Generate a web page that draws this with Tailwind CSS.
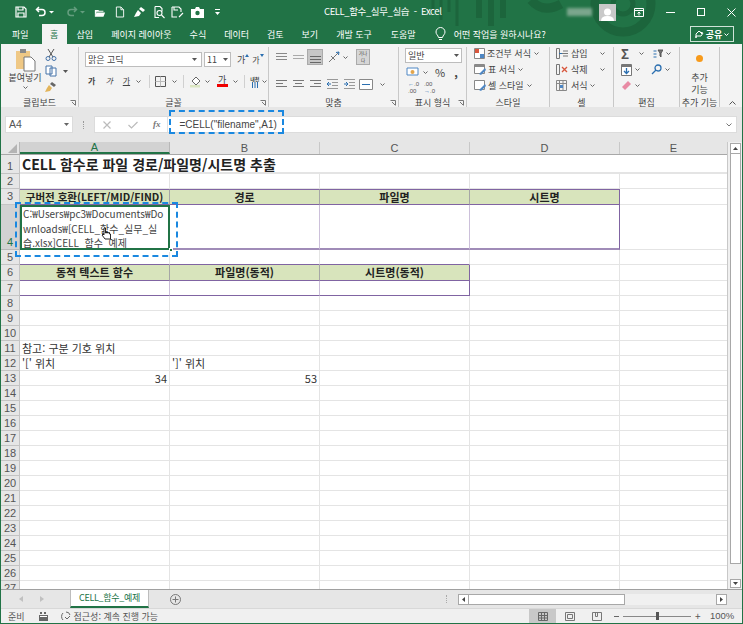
<!DOCTYPE html>
<html lang="ko">
<head>
<meta charset="UTF-8" />
<title>CELL_함수_실무_실습 - Excel</title>
<script src="https://cdn.jsdelivr.net/npm/@tailwindcss/browser@4"></script>
</head>
<body class="w-[743px] h-[624px] overflow-hidden bg-[#217346] font-['Noto_Sans_CJK_KR','Liberation_Sans',sans-serif] text-[#444]">
<div class="relative w-[743px] h-[624px] flex flex-col border-x border-b border-[#217346]">

  <!-- title bar -->
  <div class="relative h-[24px] shrink-0 flex items-center text-white">
    <svg class="absolute left-[430px] top-0" width="260" height="44" viewBox="0 0 260 44" fill="none" stroke="#1c653c"><path d="M2 0v12M10 0v20M18 0v12M26 0v26" stroke-width="3"/><path d="M48 0v18M60 0v26M72 0v18" stroke-width="6"/><circle cx="192" cy="4" r="28" stroke-width="9"/><circle cx="192" cy="4" r="10" stroke-width="5"/><path d="M100 0q12 14 30 4" stroke-width="9"/></svg>
    <div class="relative flex items-center w-full">
      <svg class="ml-[14px]" width="12" height="12" viewBox="0 0 12 12" fill="none" stroke="#fff" stroke-width="1.2"><path d="M1 1h8l2 2v8H1z"/><path d="M3 1v3h5V1M3 11V7h6v4"/></svg>
      <svg class="ml-[8px]" width="12" height="12" viewBox="0 0 12 12" fill="none" stroke="#fff" stroke-width="1.5"><path d="M4 1 1.500 3.500 4 6M2 3.500h5a3 3 0 0 1 0 6H4"/></svg>
      <svg class="ml-[2px]" width="6" height="4" viewBox="0 0 6 4" fill="#fff"><path d="M0 1h5L2.500 3.500z"/></svg>
      <svg class="ml-[11px] opacity-30" width="12" height="12" viewBox="0 0 12 12" fill="none" stroke="#fff" stroke-width="1.5"><path d="M8 1l2.500 2.500L8 6M10 3.500H5a3 3 0 0 0 0 6h3"/></svg>
      <svg class="ml-[2px] opacity-30" width="6" height="4" viewBox="0 0 6 4" fill="#fff"><path d="M0 1h5L2.500 3.500z"/></svg>
      <svg class="ml-[8px]" width="12" height="11" viewBox="0 0 14 12" fill="#fff"><path d="M1 3h4l1 1h5v1H3l-2 6zM3 6h10l-2 5H1z"/></svg>
      <svg class="ml-[9px]" width="10" height="12" viewBox="0 0 11 12" fill="none" stroke="#fff"><path d="M1.500 .5h5l3 3v8h-8zM6.500 .5v3h3"/></svg>
      <svg class="ml-[8px]" width="13" height="12" viewBox="0 0 13 12" fill="#fff"><path d="M8 1l4 3-2 2-4-3zM5 4l3 3-2 3-5 1 2-4z"/></svg>
      <svg class="ml-[7px]" width="12" height="13" viewBox="0 0 12 13" fill="none" stroke="#fff" stroke-width="1.100"><path d="M2 .5h5l2 2v3M2 .5v11h4"/><circle cx="6.500" cy="7" r="2.500"/><path d="M8.500 9l3 3"/></svg>
      <svg class="ml-[6px]" width="13" height="12" viewBox="0 0 13 12" fill="none" stroke="#fff" stroke-width="1.100"><path d="M1 1h7l2 2v3M1 1v10h5M3 1v3h4M8 11l4-4"/></svg>
      <svg class="ml-[7px]" width="13" height="11" viewBox="0 0 13 11" fill="#fff"><path d="M0 2h4l1-2h3l1 2h4v9H0z"/><circle cx="6.500" cy="6" r="2.200" fill="#217346"/></svg>
      <svg class="ml-[11px]" width="6" height="7" viewBox="0 0 6 7" fill="#fff"><path d="M0 0h5v1H0zM0 3h5L2.500 6z"/></svg>
      <span class="ml-[103px] w-[109px] shrink-0 text-[9.500px] tracking-[-0.4px] leading-none whitespace-nowrap">CELL_함수_실무_실습 &nbsp;-&nbsp; Excel</span>
      <div class="ml-[134px] w-[25px] h-[8px] bg-[#7ba68d] blur-[1.5px]"></div>
      <div class="ml-[7px] w-[17px] h-[17px] bg-[#c9c9c9] flex items-end justify-center overflow-hidden">
        <svg width="13" height="14" viewBox="0 0 13 14" fill="#fff"><circle cx="6.500" cy="5" r="3.500"/><path d="M0 14q0-5 6.500-5T13 14z"/></svg>
      </div>
      <svg class="ml-[18px]" width="10" height="9" viewBox="0 0 10 9" fill="none" stroke="#fff"><path d="M.500.500h9v8h-9zM.500 2.500h9M5 7.500V4M3.500 5.500 5 4l1.500 1.500"/></svg>
      <div class="ml-[22px] w-[9px] h-px bg-white"></div>
      <div class="ml-[22px] w-[8px] h-[8px] border border-white"></div>
      <svg class="ml-[22px]" width="9" height="9" viewBox="0 0 9 9" stroke="#fff"><path d="M.500.500l8 8M8.500.500l-8 8"/></svg>
    </div>
  </div>

  <!-- tabs -->
  <div class="relative h-[20px] shrink-0 flex items-center text-white text-[9px] leading-none whitespace-nowrap">
    <span class="ml-[11px]">파일</span>
    <span class="ml-[13px] w-[25px] h-[20px] flex items-center justify-center bg-[#f3f3f3] text-[#217346]">홈</span>
    <span class="ml-[10px]">삽입</span>
    <span class="ml-[18px]">페이지 레이아웃</span>
    <span class="ml-[18px]">수식</span>
    <span class="ml-[18px]">데이터</span>
    <span class="ml-[18px]">검토</span>
    <span class="ml-[18px]">보기</span>
    <span class="ml-[18px]">개발 도구</span>
    <span class="ml-[19px]">도움말</span>
    <svg class="ml-[19px]" width="11" height="14" viewBox="0 0 11 14" fill="none" stroke="#fff"><path d="M3.500 10.500C3 8 1 7.500 1 5a4.500 4.500 0 0 1 9 0c0 2.500-2 3-2.500 5.500zM4 12.500h3"/></svg>
    <span class="ml-[8px]">어떤 작업을 원하시나요?</span>
    <div class="ml-auto mr-[8px] w-[44px] h-[16px] border border-[#cfe3d8] flex items-center justify-center gap-[2px]">
      <svg width="9" height="9" viewBox="0 0 9 9" fill="none" stroke="#fff"><path d="M1 8V4l3-3 1 1 3 1-2 3H1zM5 2l2 2"/></svg>
      <span class="font-bold">공유</span>
      <svg width="5" height="3" viewBox="0 0 5 3" fill="none" stroke="#fff"><path d="M.500.500l2 2 2-2"/></svg>
    </div>
  </div>

  <!-- ribbon -->
  <div class="relative h-[63px] shrink-0 flex bg-[#f3f3f3] text-[9px] leading-none whitespace-nowrap">
    <!-- clipboard -->
    <div class="w-[78px] shrink-0 relative flex flex-col border-r border-[#c8c8c8] mt-[3px]">
      <div class="flex-1 flex">
        <div class="ml-[6px] w-[36px] flex flex-col items-center">
          <svg class="mt-[1px]" width="21" height="24" viewBox="0 0 21 24"><path d="M1 3h14v18H1z" fill="#efc885"/><path d="M5 1h6v4H5z" fill="#8a8a8a"/><path d="M9 9h7l4 4v10H9z" fill="#fff" stroke="#777"/></svg>
          <span class="mt-[1px]">붙여넣기</span>
          <svg class="mt-[4px]" width="5" height="3" viewBox="0 0 5 3" fill="none" stroke="#666"><path d="M.500.500l2 2 2-2"/></svg>
        </div>
        <div class="ml-[2px] flex flex-col gap-[4px] mt-[1px]">
          <svg width="12" height="13" viewBox="0 0 12 13" fill="none" stroke="#4472a8"><path d="M3 1l5 8M9 1L4 9" stroke="#555"/><circle cx="3" cy="10.500" r="2"/><circle cx="9" cy="10.500" r="2"/></svg>
          <div class="flex items-center gap-[8px]">
            <svg width="12" height="12" viewBox="0 0 12 12" fill="#fff" stroke="#4472a8"><path d="M1 1h6v8H1zM5 3h6v8H5z"/></svg>
            <svg width="5" height="3" viewBox="0 0 5 3" fill="#555" class="-ml-[2px]"><path d="M0 0h5L2.500 3z"/></svg>
          </div>
          <svg width="12" height="12" viewBox="0 0 12 12"><path d="M7 1l4 3-2 2-4-3z" fill="#666"/><path d="M4 4l3 3-2 3-5 1 2-4z" fill="#e2b45a"/></svg>
        </div>
      </div>
      <div class="relative h-[10px] flex items-center justify-center text-[9px]">클립보드
        <svg class="absolute right-[2px] bottom-[1px]" width="6" height="6" viewBox="0 0 6 6" fill="none" stroke="#777"><path d="M.500.500h5v5M2 2l3 3"/></svg>
      </div>
    </div>
    <!-- font -->
    <div class="w-[190px] shrink-0 relative flex flex-col border-r border-[#c8c8c8] mt-[3px]">
      <div class="flex items-center mt-[5px] ml-[6px] h-[15px]">
        <div class="w-[117px] h-[15px] bg-white border border-[#bdbdbd] flex items-center justify-between px-[2px]"><span>맑은 고딕</span><svg width="5" height="3" viewBox="0 0 5 3" fill="#555" class="mr-[2px]"><path d="M0 0h5L2.500 3z"/></svg></div>
        <div class="ml-[2px] w-[27px] h-[15px] bg-white border border-[#bdbdbd] flex items-center justify-between px-[2px]"><span>11</span><svg width="5" height="3" viewBox="0 0 5 3" fill="#555"><path d="M0 0h5L2.500 3z"/></svg></div>
        <span class="ml-[6px] text-[9px]">가</span>
        <svg class="mb-[8px]" width="4" height="3" viewBox="0 0 4 3" fill="#2b6fb0"><path d="M2 0l2 3H0z"/></svg>
        <span class="ml-[3px] text-[8px]">가</span>
        <svg class="mb-[8px]" width="4" height="3" viewBox="0 0 4 3" fill="#2b6fb0"><path d="M0 0h4L2 3z"/></svg>
      </div>
      <div class="flex items-center mt-[7px] ml-[9px] h-[14px] text-[8px]">
        <span class="font-bold">가</span>
        <span class="ml-[10px] italic">가</span>
        <span class="ml-[10px] underline">가</span>
        <svg class="ml-[6px]" width="5" height="3" viewBox="0 0 5 3" fill="none" stroke="#666"><path d="M.500.500l2 2 2-2"/></svg>
        <div class="ml-[8px] w-px h-[13px] bg-[#d0d0d0]"></div>
        <svg class="ml-[5px]" width="11" height="11" viewBox="0 0 11 11" fill="none" stroke="#555"><path d="M.500.500h10v10H.500z"/><path d="M5.500.500v10M.500 5.500h10" stroke="#bbb"/></svg>
        <svg class="ml-[6px]" width="5" height="3" viewBox="0 0 5 3" fill="none" stroke="#666"><path d="M.500.500l2 2 2-2"/></svg>
        <div class="ml-[6px] w-px h-[13px] bg-[#d0d0d0]"></div>
        <svg class="ml-[5px]" width="12" height="13" viewBox="0 0 12 13"><path d="M3 6l4-4 4 4-4 4z" fill="#fff" stroke="#666"/><path d="M1 10h10v2.500H1z" fill="#dbe6c2"/></svg>
        <svg class="ml-[4px]" width="5" height="3" viewBox="0 0 5 3" fill="none" stroke="#666"><path d="M.500.500l2 2 2-2"/></svg>
        <span class="ml-[6px] flex flex-col items-center w-[12px] text-[9px] leading-[9px]">가<span class="block w-[11px] h-[3px] bg-[#f00000]"></span></span>
        <svg class="ml-[5px]" width="5" height="3" viewBox="0 0 5 3" fill="none" stroke="#666"><path d="M.500.500l2 2 2-2"/></svg>
        <div class="ml-[6px] w-px h-[13px] bg-[#d0d0d0]"></div>
        <span class="ml-[5px] flex flex-col items-center text-[5px] leading-[7px] font-bold">내천
          <svg width="8" height="6" viewBox="0 0 8 6" stroke="#2b6fb0"><path d="M1.500 0v6M4 0v6M6.500 0v6"/></svg>
        </span>
        <svg class="ml-[3px]" width="5" height="3" viewBox="0 0 5 3" fill="none" stroke="#666"><path d="M.500.500l2 2 2-2"/></svg>
      </div>
      <div class="relative mt-auto h-[10px] flex items-center justify-center">글꼴
        <svg class="absolute right-[2px] bottom-[1px]" width="6" height="6" viewBox="0 0 6 6" fill="none" stroke="#777"><path d="M.500.500h5v5M2 2l3 3"/></svg>
      </div>
    </div>
    <!-- align -->
    <div class="w-[130px] shrink-0 relative flex flex-col border-r border-[#c8c8c8] mt-[3px]">
      <div class="flex items-center mt-[2px] ml-[7px] h-[16px]">
        <svg width="11" height="8" viewBox="0 0 11 8" stroke="#888"><path d="M0 .500h11M0 3.500h11M0 6.500h11" /></svg>
        <svg class="ml-[6px]" width="11" height="8" viewBox="0 0 11 8" stroke="#aaa"><path d="M0 2.500h11M0 5.500h11"/></svg>
        <div class="ml-[3px] w-[16px] h-[16px] bg-[#c6c6c6] border border-[#aaa] flex items-end justify-center pb-[1px]"><svg width="11" height="8" viewBox="0 0 11 8" stroke="#666"><path d="M0 1.500h11M0 4.500h11M0 7.500h11"/></svg></div>
        <svg class="ml-[5px]" width="13" height="12" viewBox="0 0 13 12" fill="none" stroke="#777"><path d="M1 11l10-10M3 5l4 4" /><path d="M11 1l-3 .500M11 1l-.500 3" stroke="#2b6fb0"/></svg>
        <svg class="ml-[2px]" width="5" height="3" viewBox="0 0 5 3" fill="none" stroke="#666"><path d="M.500.500l2 2 2-2"/></svg>
        <div class="ml-[8px] w-[14px] h-[16px] bg-[#d6d6d6] border border-[#aaa] text-[4.500px] leading-[7px] text-center">가나<br />다</div>
      </div>
      <div class="flex items-center mt-[13px] ml-[7px] h-[12px]">
        <svg width="11" height="9" viewBox="0 0 11 9" stroke="#777"><path d="M0 .500h11M0 3.500h7M0 6.500h11"/></svg>
        <svg class="ml-[6px]" width="11" height="9" viewBox="0 0 11 9" stroke="#777"><path d="M0 .500h11M2 3.500h7M0 6.500h11"/></svg>
        <svg class="ml-[6px]" width="11" height="9" viewBox="0 0 11 9" stroke="#777"><path d="M0 .500h11M4 3.500h7M0 6.500h11"/></svg>
        <svg class="ml-[6px]" width="11" height="10" viewBox="0 0 11 10" stroke="#999" fill="none"><path d="M0 .500h11M5 3.500h6M5 6.500h6M0 9.500h11"/><path d="M4 5H0M2 3 0 5l2 2" stroke="#2b6fb0"/></svg>
        <svg class="ml-[6px]" width="11" height="10" viewBox="0 0 11 10" stroke="#999" fill="none"><path d="M0 .500h11M5 3.500h6M5 6.500h6M0 9.500h11"/><path d="M0 5h4M2 3l2 2-2 2" stroke="#2b6fb0"/></svg>
        <svg class="ml-[4px]" width="14" height="11" viewBox="0 0 14 11" stroke="#888" fill="#fff"><path d="M.500.500h13v10H.500z"/><path d="M3 5.500h8" stroke="#2b6fb0"/></svg>
        <svg class="ml-[7px]" width="5" height="3" viewBox="0 0 5 3" fill="none" stroke="#666"><path d="M.500.500l2 2 2-2"/></svg>
      </div>
      <div class="relative mt-auto h-[10px] flex items-center justify-center">맞춤
        <svg class="absolute right-[2px] bottom-[1px]" width="6" height="6" viewBox="0 0 6 6" fill="none" stroke="#777"><path d="M.500.500h5v5M2 2l3 3"/></svg>
      </div>
    </div>
    <!-- number -->
    <div class="w-[68px] shrink-0 relative flex flex-col border-r border-[#c8c8c8] mt-[3px]">
      <div class="ml-[6px] mt-px w-[57px] h-[15px] bg-white border border-[#bdbdbd] flex items-center justify-between px-[2px]"><span>일반</span><svg width="5" height="3" viewBox="0 0 5 3" fill="#555"><path d="M0 0h5L2.500 3z"/></svg></div>
      <div class="flex items-center mt-[2px] ml-[7px] h-[14px]">
        <svg width="13" height="11" viewBox="0 0 13 11"><path d="M1 1h11v7H1z" fill="#fff" stroke="#4e87c4"/><circle cx="6.500" cy="5" r="2" fill="#e2a54b"/></svg>
        <svg class="ml-[4px]" width="5" height="3" viewBox="0 0 5 3" fill="none" stroke="#666"><path d="M.500.500l2 2 2-2"/></svg>
        <span class="ml-[7px] text-[11px]">%</span>
        <span class="ml-[9px] text-[11px] font-bold">,</span>
      </div>
      <div class="flex items-center mt-[2px] ml-[9px] h-[14px] text-[6px] leading-[7px] font-['Liberation_Sans']">
        <span class="text-[#555]"><span class="text-[#2b6fb0]">←</span>.0<br />.00</span>
        <span class="ml-[5px] text-[#555]">.00<br /><span class="text-[#2b6fb0]">→</span>.0</span>
      </div>
      <div class="relative mt-auto h-[10px] flex items-center justify-center">표시 형식
        <svg class="absolute right-[2px] bottom-[1px]" width="6" height="6" viewBox="0 0 6 6" fill="none" stroke="#777"><path d="M.500.500h5v5M2 2l3 3"/></svg>
      </div>
    </div>
    <!-- styles -->
    <div class="w-[83px] shrink-0 flex flex-col border-r border-[#c8c8c8] mt-[3px]">
      <div class="ml-[7px] flex flex-col gap-[3px]">
        <div class="flex items-center h-[13px] gap-[2px]"><svg width="11" height="11" viewBox="0 0 11 11"><path d="M.500.500h10v10H.500z" fill="#fff" stroke="#888"/><path d="M1 1h4v4H1z" fill="#d8563c"/><path d="M6 6h4v4H6z" fill="#4e87c4"/></svg>조건부 서식<svg class="ml-[1px]" width="5" height="3" viewBox="0 0 5 3" fill="none" stroke="#666"><path d="M.500.500l2 2 2-2"/></svg></div>
        <div class="flex items-center h-[13px] gap-[2px]"><svg width="12" height="11" viewBox="0 0 12 11"><path d="M.500.500h10v9H.500z" fill="#fff" stroke="#888"/><path d="M1 1h9v2H1z" fill="#8a8a8a"/><path d="M5 10l6-6 1 2-5 5z" fill="#4e87c4"/></svg>표 서식<svg class="ml-[1px]" width="5" height="3" viewBox="0 0 5 3" fill="none" stroke="#666"><path d="M.500.500l2 2 2-2"/></svg></div>
        <div class="flex items-center h-[13px] gap-[2px]"><svg width="12" height="11" viewBox="0 0 12 11"><path d="M.500.500h10v9H.500z" fill="#fff" stroke="#888"/><path d="M5 10l6-6 1 2-5 5z" fill="#4e87c4"/></svg>셀 스타일<svg class="ml-[1px]" width="5" height="3" viewBox="0 0 5 3" fill="none" stroke="#666"><path d="M.500.500l2 2 2-2"/></svg></div>
      </div>
      <div class="mt-auto h-[10px] flex items-center justify-center">스타일</div>
    </div>
    <!-- cells -->
    <div class="w-[64px] shrink-0 flex flex-col border-r border-[#c8c8c8] mt-[3px]">
      <div class="ml-[6px] flex flex-col gap-[3px]">
        <div class="flex items-center h-[13px]"><svg width="13" height="11" viewBox="0 0 13 11" fill="none" stroke="#777"><path d="M.500 .5h3v10h-3zM6 5.500h6M7 3h5M7 8h5"/><path d="M3 5.500h3" stroke="#2b6fb0"/></svg><span class="ml-[2px]">삽입</span><svg class="ml-[12px]" width="5" height="3" viewBox="0 0 5 3" fill="none" stroke="#666"><path d="M.500.500l2 2 2-2"/></svg></div>
        <div class="flex items-center h-[13px]"><svg width="13" height="11" viewBox="0 0 13 11" fill="none" stroke="#777"><path d="M.500 .5h3v10h-3z"/><path d="M6 3l5 5M11 3 6 8" stroke="#d8563c" stroke-width="1.300"/></svg><span class="ml-[2px]">삭제</span><svg class="ml-[12px]" width="5" height="3" viewBox="0 0 5 3" fill="none" stroke="#666"><path d="M.500.500l2 2 2-2"/></svg></div>
        <div class="flex items-center h-[13px]"><svg width="13" height="11" viewBox="0 0 13 11" fill="none" stroke="#888"><path d="M.500.500h10v10H.500zM.500 3.500h10M3.500.500v10M7 .500v10"/><path d="M4 5h3v3H4z" fill="#4e87c4" stroke="none"/></svg><span class="ml-[2px]">서식</span><svg class="ml-[2px]" width="5" height="3" viewBox="0 0 5 3" fill="none" stroke="#666"><path d="M.500.500l2 2 2-2"/></svg></div>
      </div>
      <div class="mt-auto h-[10px] flex items-center justify-center">셀</div>
    </div>
    <!-- editing -->
    <div class="w-[66px] shrink-0 flex flex-col border-r border-[#c8c8c8] mt-[3px]">
      <div class="ml-[7px] flex flex-col gap-[3px]">
        <div class="flex items-center h-[13px]"><span class="w-[12px] text-[13px] leading-[13px] font-bold text-[#555]">Σ</span><svg class="ml-[6px]" width="5" height="3" viewBox="0 0 5 3" fill="none" stroke="#666"><path d="M.500.500l2 2 2-2"/></svg><svg class="ml-[9px]" width="10" height="10" viewBox="0 0 10 10" stroke="#555" fill="#777"><path d="M5 1h5L8 4v4L7 7V4z"/><path d="M.500 2h3M.500 5h3M.500 8h3" stroke="#2b6fb0"/></svg><svg class="ml-[3px]" width="5" height="3" viewBox="0 0 5 3" fill="none" stroke="#666"><path d="M.500.500l2 2 2-2"/></svg></div>
        <div class="flex items-center h-[13px]"><svg width="11" height="12" viewBox="0 0 11 12"><path d="M.500.500h10v11H.500z" fill="#fff" stroke="#777"/><path d="M1 1h9v2H1z" fill="#777"/><path d="M5.500 4v5M3 7l2.500 2.500L8 7" stroke="#2b6fb0" fill="none" stroke-width="1.300"/></svg><svg class="ml-[3px]" width="5" height="3" viewBox="0 0 5 3" fill="none" stroke="#666"><path d="M.500.500l2 2 2-2"/></svg><svg class="ml-[11px]" width="11" height="11" viewBox="0 0 11 11" fill="none" stroke="#2b6fb0" stroke-width="1.300"><circle cx="7" cy="4" r="3"/><path d="M5 6l-4 4"/></svg><svg class="ml-[3px]" width="5" height="3" viewBox="0 0 5 3" fill="none" stroke="#666"><path d="M.500.500l2 2 2-2"/></svg></div>
        <div class="flex items-center h-[13px]"><svg width="11" height="11" viewBox="0 0 11 11"><path d="M7 1l3 3-6 6-3-3z" fill="#e88aa4"/></svg><svg class="ml-[3px]" width="5" height="3" viewBox="0 0 5 3" fill="none" stroke="#666"><path d="M.500.500l2 2 2-2"/></svg></div>
      </div>
      <div class="mt-auto h-[10px] flex items-center justify-center">편집</div>
    </div>
    <!-- add-ins -->
    <div class="w-[40px] shrink-0 flex flex-col items-center border-r border-[#c8c8c8] mt-[3px]">
      <div class="w-[7px] h-[7px] rounded-full bg-[#f79a1b] mt-[8px]"></div>
      <div class="mt-[10px] text-center leading-[12px]">추가<br />기능</div>
      <div class="mt-auto h-[10px] flex items-center justify-center">추가 기능</div>
    </div>
    <svg class="ml-[9px] mt-[57px]" width="7" height="4" viewBox="0 0 7 4" fill="none" stroke="#555"><path d="M.500 3.500l3-3 3 3"/></svg>
  </div>

  <!-- formula bar -->
  <div class="h-[35px] shrink-0 bg-[#e6e6e6] flex items-start pt-[9px] text-[10px] leading-none">
    <div class="ml-[4px] w-[68px] h-[17px] bg-white border border-[#dcdcdc] flex items-center justify-between px-[3px] font-['Liberation_Sans'] text-[#555] text-[10.500px]">A4<svg width="5" height="3" viewBox="0 0 5 3" fill="#666"><path d="M0 0h5L2.500 3z"/></svg></div>
    <div class="ml-[10px] mt-[5px] w-[2px] h-[8px] border-l border-dotted border-[#999]"></div>
    <div class="ml-[9px] flex-1 mr-[5px] h-[17px] bg-white border border-[#dcdcdc] flex items-center">
      <svg class="ml-[8px]" width="8" height="8" viewBox="0 0 8 8" stroke="#bbb" stroke-width="1.200"><path d="M.500.500l7 7M7.500.500l-7 7"/></svg>
      <svg class="ml-[17px]" width="10" height="8" viewBox="0 0 10 8" fill="none" stroke="#bbb" stroke-width="1.200"><path d="M.500 4l3 3 6-6"/></svg>
      <span class="ml-[15px] text-[#777] text-[9px] italic font-['Liberation_Serif'] font-bold">fx</span>
      <div class="ml-[6px] w-px h-[15px] bg-[#e0e0e0]"></div>
      <span class="ml-[12px] font-['Liberation_Sans'] text-[#444]">=CELL("filename",A1)</span>
      <svg class="ml-auto mr-[4px]" width="6" height="4" viewBox="0 0 6 4" fill="none" stroke="#777"><path d="M.500.500l2.500 2.500L5.500.500"/></svg>
    </div>
  </div>

  <!-- sheet + scrollbar -->
  <div class="flex-1 min-h-0 flex bg-white">
    <div id="sheet" class="w-[726px] shrink-0 flex flex-col overflow-hidden text-[11px] leading-none text-[#333]">
      <!-- column headers -->
      <div class="flex h-[13px] shrink-0 bg-[#e6e6e6] text-[11px] text-[#555] font-['Liberation_Sans'] border-b border-[#a8a8a8]">
        <div class="w-[19px] flex items-end justify-end border-r border-[#b8b8b8] pr-[2px] pb-[1px]"><svg width="9" height="9" viewBox="0 0 9 9" fill="#b4b4b4"><path d="M9 0v9H0z"/></svg></div>
        <div class="w-[150px] flex items-center justify-center bg-[#d2d2d2] text-[#217346] border-r border-[#b8b8b8] border-b-2 border-b-[#217346]">A</div>
        <div class="w-[150px] flex items-center justify-center border-r border-[#c8c8c8]">B</div>
        <div class="w-[150px] flex items-center justify-center border-r border-[#c8c8c8]">C</div>
        <div class="w-[150px] flex items-center justify-center border-r border-[#c8c8c8]">D</div>
        <div class="flex-1 flex items-center justify-center">E</div>
      </div>
      <!-- row 1 -->
      <div class="flex h-[19px] shrink-0">
        <div class="w-[19px] bg-[#e6e6e6] border-r border-b border-[#c4c4c4] flex items-end justify-center pb-[1px] text-[11px] text-[#555] font-['Liberation_Sans']">1</div>
        <div class="flex-1 border-b-2 border-[#e4e4e4] pl-[2px] flex items-center text-[14px] font-bold text-[#222] whitespace-nowrap">CELL 함수로 파일 경로/파일명/시트명 추출</div>
      </div>
      <!-- row 2 -->
      <div class="flex h-[15px] shrink-0">
        <div class="w-[19px] bg-[#e6e6e6] border-r border-b border-[#c4c4c4] flex items-center justify-center text-[11px] text-[#555] font-['Liberation_Sans']">2</div>
        <div class="w-[150px] border-r border-b border-[#e4e4e4]"></div>
        <div class="w-[150px] border-r border-b border-[#e4e4e4]"></div>
        <div class="w-[150px] border-r border-b border-[#e4e4e4]"></div>
        <div class="w-[150px] border-r border-b border-[#e4e4e4]"></div>
        <div class="flex-1 border-b border-[#e4e4e4]"></div>
      </div>
      <!-- row 3 -->
      <div class="flex h-[16px] shrink-0">
        <div class="w-[19px] bg-[#e6e6e6] border-r border-b border-[#c4c4c4] flex items-center justify-center text-[11px] text-[#555] font-['Liberation_Sans']">3</div>
        <div class="w-[150px] h-[16px] bg-[#d8e4bc] border-y border-y-[#8064a2] border-r border-r-[#a6a6a6] flex items-center justify-center font-bold text-[#222] whitespace-nowrap text-[10.500px]">구버전 호환(LEFT/MID/FIND)</div>
        <div class="w-[150px] h-[16px] bg-[#d8e4bc] border-y border-y-[#8064a2] border-r border-r-[#a6a6a6] flex items-center justify-center font-bold text-[#222]">경로</div>
        <div class="w-[150px] h-[16px] bg-[#d8e4bc] border-y border-y-[#8064a2] border-r border-r-[#a6a6a6] flex items-center justify-center font-bold text-[#222]">파일명</div>
        <div class="w-[150px] h-[16px] bg-[#d8e4bc] border-y border-y-[#8064a2] border-r border-r-[#8064a2] flex items-center justify-center font-bold text-[#222]">시트명</div>
        <div class="flex-1 border-b border-[#e4e4e4]"></div>
      </div>
      <!-- row 4 -->
      <div class="flex h-[45px] shrink-0">
        <div class="w-[19px] bg-[#d2d2d2] border-r border-b border-[#b8b8b8] flex items-end justify-center pb-[1px] text-[11px] text-[#217346] font-['Liberation_Sans']">4</div>
        <div class="w-[150px] h-[45px] border-2 border-[#217346] pl-[1px] text-[10px] leading-[14.500px] text-[#444] whitespace-nowrap overflow-hidden">C:₩Users₩pc3₩Documents₩Do<br />wnloads₩[CELL_함수_실무_실<br />습.xlsx]CELL_함수_예제</div>
        <div class="w-[150px] border-r border-r-[#ccc0da] border-b-2 border-b-[#a08cb8]"></div>
        <div class="w-[150px] border-r border-r-[#ccc0da] border-b-2 border-b-[#a08cb8]"></div>
        <div class="w-[150px] border-r border-r-[#8064a2] border-b-2 border-b-[#a08cb8]"></div>
        <div class="flex-1 border-b border-[#e4e4e4]"></div>
      </div>
      <!-- row 5 -->
      <div class="flex h-[15px] shrink-0">
        <div class="w-[19px] bg-[#e6e6e6] border-r border-b border-[#c4c4c4] flex items-center justify-center text-[11px] text-[#555] font-['Liberation_Sans']">5</div>
        <div class="w-[150px] border-r border-b border-[#e4e4e4] border-b-[#8064a2]"></div>
        <div class="w-[150px] border-r border-b border-[#e4e4e4] border-b-[#8064a2]"></div>
        <div class="w-[150px] border-r border-b border-[#e4e4e4] border-b-[#8064a2]"></div>
        <div class="w-[150px] border-r border-b border-[#e4e4e4]"></div>
        <div class="flex-1 border-b border-[#e4e4e4]"></div>
      </div>
      <!-- row 6 -->
      <div class="flex h-[16px] shrink-0">
        <div class="w-[19px] bg-[#e6e6e6] border-r border-b border-[#c4c4c4] flex items-center justify-center text-[11px] text-[#555] font-['Liberation_Sans']">6</div>
        <div class="w-[150px] bg-[#d8e4bc] border-r border-r-[#a6a6a6] border-b border-b-[#8064a2] flex items-center justify-center font-bold text-[#222]">동적 텍스트 함수</div>
        <div class="w-[150px] bg-[#d8e4bc] border-r border-r-[#a6a6a6] border-b border-b-[#8064a2] flex items-center justify-center font-bold text-[#222]">파일명(동적)</div>
        <div class="w-[150px] bg-[#d8e4bc] border-r border-r-[#8064a2] border-b border-b-[#8064a2] flex items-center justify-center font-bold text-[#222]">시트명(동적)</div>
        <div class="w-[150px] border-r border-b border-[#e4e4e4]"></div>
        <div class="flex-1 border-b border-[#e4e4e4]"></div>
      </div>
      <!-- row 7 -->
      <div class="flex h-[15px] shrink-0">
        <div class="w-[19px] bg-[#e6e6e6] border-r border-b border-[#c4c4c4] flex items-center justify-center text-[11px] text-[#555] font-['Liberation_Sans']">7</div>
        <div class="w-[150px] border-r border-r-[#ccc0da] border-b border-b-[#8064a2]"></div>
        <div class="w-[150px] border-r border-r-[#ccc0da] border-b border-b-[#8064a2]"></div>
        <div class="w-[150px] border-r border-r-[#8064a2] border-b border-b-[#8064a2]"></div>
        <div class="w-[150px] border-r border-b border-[#e4e4e4]"></div>
        <div class="flex-1 border-b border-[#e4e4e4]"></div>
      </div>
      <div id="rows"></div>
    </div>
    <!-- vertical scrollbar -->
    <div class="flex-1 bg-[#f0f0f0] border-l border-[#c8c8c8] flex flex-col items-center pt-[1px] h-[447px]">
      <div class="w-[11px] h-[11px] bg-white border border-[#a8a8a8] flex items-center justify-center"><svg width="5" height="3" viewBox="0 0 5 3" fill="#444"><path d="M2.500 0 5 3H0z"/></svg></div>
      <div class="w-[11px] h-[410px] bg-white border-x border-b border-[#a8a8a8]"></div>
      <div class="w-[11px] h-[9px] mt-auto mb-[1px] bg-white border border-[#a8a8a8] flex items-center justify-center"><svg width="5" height="3" viewBox="0 0 5 3" fill="#444"><path d="M0 0h5L2.500 3z"/></svg></div>
    </div>
  </div>

  <!-- sheet tabs -->
  <div class="h-[19px] shrink-0 bg-[#e6e6e6] border-t border-[#a0a0a0] flex items-center leading-none">
    <svg class="ml-[18px]" width="4" height="6" viewBox="0 0 4 6" fill="#c0c0c0"><path d="M4 0v6L0 3z"/></svg>
    <svg class="ml-[17px]" width="4" height="6" viewBox="0 0 4 6" fill="#c0c0c0"><path d="M0 0v6l4-3z"/></svg>
    <div class="ml-[26px] w-[79px] h-[18px] bg-white border-x border-[#bdbdbd] border-b-2 border-b-[#217346] flex items-center justify-center text-[#217346] text-[9px] tracking-[-0.3px] whitespace-nowrap -mt-px">CELL_함수_예제</div>
    <svg class="ml-[21px]" width="11" height="11" viewBox="0 0 11 11" fill="none" stroke="#777"><circle cx="5.500" cy="5.500" r="5"/><path d="M5.500 2.500v6M2.500 5.500h6"/></svg>
    <div class="ml-auto w-px h-[8px] border-l border-dotted border-[#aaa]"></div>
    <div class="ml-[11px] w-[11px] h-[11px] bg-white border border-[#a8a8a8] flex items-center justify-center shrink-0"><svg width="3" height="5" viewBox="0 0 3 5" fill="#444"><path d="M3 0v5L0 2.500z"/></svg></div>
    <div class="w-[156px] h-[11px] bg-white border-y border-r border-[#a8a8a8] shrink-0"></div>
    <div class="w-[91px] h-[11px] bg-[#f0f0f0] shrink-0"></div>
    <div class="w-[11px] h-[11px] mr-[15px] bg-white border border-[#a8a8a8] flex items-center justify-center shrink-0"><svg width="3" height="5" viewBox="0 0 3 5" fill="#444"><path d="M0 0v5l3-2.500z"/></svg></div>
  </div>

  <!-- status bar -->
  <div class="h-[15px] shrink-0 bg-[#f0f0f0] border-t border-[#d8d8d8] flex items-center text-[9px] leading-none text-[#555] whitespace-nowrap">
    <span class="ml-[7px]">준비</span>
    <svg class="ml-[14px]" width="9" height="9" viewBox="0 0 9 9" fill="#666"><path d="M0 3h9v6H0zM1 0h2v2H1zM5 0h2v2H5z"/><path d="M1 4h7v1H1z" fill="#fff"/></svg>
    <svg class="ml-[12px]" width="12" height="11" viewBox="0 0 12 11" fill="none" stroke="#666"><path d="M3 2a5 5 0 0 0 0 7M6 1a4 4 0 0 1 4 3M5 6l2 2 3-3"/></svg>
    <span class="ml-[2px]">접근성: 계속 진행 가능</span>
    <div class="ml-auto w-[27px] h-[14px] bg-[#c8c8c8] flex items-center justify-center shrink-0"><svg width="10" height="9" viewBox="0 0 10 9" fill="none" stroke="#666"><path d="M.500.500h9v8h-9zM.500 3.500h9M.500 6h9M3.500.500v8M6.500.500v8"/></svg></div>
    <svg class="ml-[9px] shrink-0" width="10" height="9" viewBox="0 0 10 9" fill="none" stroke="#777"><path d="M.500.500h9v8h-9z"/><path d="M2.500 2.500h5v4h-5z"/></svg>
    <svg class="ml-[17px] shrink-0" width="10" height="9" viewBox="0 0 10 9" fill="none" stroke="#777"><path d="M.500.500h9v8h-9zM5.500.500v4h-2v-4"/></svg>
    <div class="ml-[12px] w-[5px] h-px bg-[#666] shrink-0"></div>
    <div class="relative ml-[4px] w-[68px] h-px bg-[#888] shrink-0 flex items-center"><div class="absolute left-[33px] w-[3px] h-[8px] bg-[#555]"></div></div>
    <span class="ml-[4px] w-[6px] text-[10px] shrink-0">+</span>
    <span class="ml-[9px] w-[21px] mr-[11px] font-['Liberation_Sans'] text-[9.500px] shrink-0">100%</span>
  </div>

  <!-- callouts over the sheet -->
  <div class="absolute left-[168px] top-[110px] w-[115px] h-[24px] border-2 border-dashed border-[#1a88e0] pointer-events-none"></div>
  <div class="absolute left-[14px] top-[202px] w-[163px] h-[55px] border-2 border-dashed border-[#1a88e0] pointer-events-none"></div>
  <div class="absolute left-[168px] top-[248px] w-[4px] h-[4px] bg-[#217346] border border-white"></div>
  <svg class="absolute left-[100px] top-[227px]" width="11" height="14" viewBox="0 0 11 14"><path d="M3 1h1.500v5h1V5h1v1h1V5.500h1V7h1v5H4L1 8l1-1 1 1z" fill="#fff" stroke="#111" stroke-width=".9"/></svg>
</div>

<script>
  // plain rows 8 to 27, with the notes in rows 11-13
  const notes = {
    11: ["참고: 구분 기호 위치", ""],
    12: ["'[' 위치", "']' 위치"],
    13: ["34", "53"],
  };
  const cell = "w-[150px] h-[15px] border-r border-b border-[#e4e4e4] px-[2px] flex items-center whitespace-nowrap";
  let html = "";
  for (let n = 8; n <= 27; n++) {
    const [a, b] = notes[n] || ["", ""];
    const just = n === 13 ? " justify-end" : "";
    html += `<div class="flex h-[15px] shrink-0">
      <div class="w-[19px] bg-[#e6e6e6] border-r border-b border-[#c4c4c4] flex items-center justify-center text-[11px] text-[#555] font-['Liberation_Sans']">${n}</div>
      <div class="${cell}${just}">${a}</div>
      <div class="${cell}${just}">${b}</div>
      <div class="${cell}"></div>
      <div class="${cell}"></div>
      <div class="flex-1 border-b border-[#e4e4e4]"></div>
    </div>`;
  }
  document.getElementById("rows").innerHTML = html;
</script>
</body>
</html>
